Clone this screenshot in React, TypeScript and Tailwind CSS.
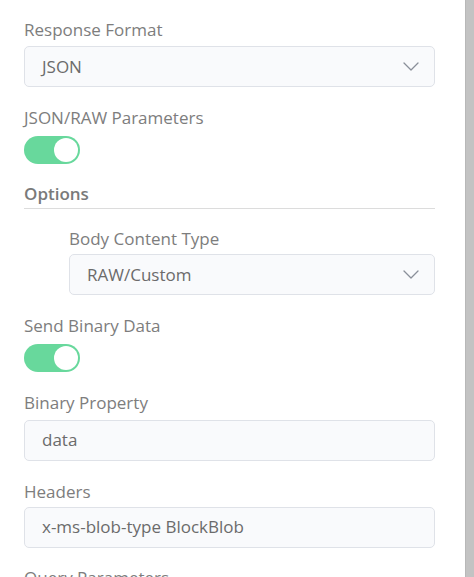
import React from "react";

function Chevron() {
  return (
    <svg width="16" height="9" viewBox="0 0 16 9" fill="none" className="shrink-0">
      <path d="M1 1 L8 8 L15 1" stroke="#8a8f99" strokeWidth="1.3" strokeLinecap="round" strokeLinejoin="round" />
    </svg>
  );
}

function Label({ children, className = "" }: { children: React.ReactNode; className?: string }) {
  return <div className={"text-[17px] leading-[24px] text-[#7d7d7d] " + className}>{children}</div>;
}

function Select({ value, className = "" }: { value: string; className?: string }) {
  return (
    <div className={"h-[41px] flex items-center justify-between rounded-[5px] border border-[#dfe2e8] bg-[#f9fafc] pl-[17px] pr-[15px] " + className}>
      <span className="text-[17px] text-[#6b6b6b]">{value}</span>
      <Chevron />
    </div>
  );
}

function Input({ value, className = "" }: { value: string; className?: string }) {
  return (
    <div className={"h-[41px] flex items-center rounded-[5px] border border-[#dfe2e8] bg-[#f9fafc] pl-[17px] " + className}>
      <span className="text-[17px] text-[#6b6b6b]">{value}</span>
    </div>
  );
}

function Toggle({ className = "" }: { className?: string }) {
  return (
    <div className={"w-[56px] h-[28px] rounded-full bg-[#68d89c] flex items-center justify-end pr-[2px] " + className}>
      <div className="w-[24px] h-[24px] rounded-full bg-white" />
    </div>
  );
}

export default function App() {
  return (
    <div className="w-[474px] h-[577px] overflow-hidden bg-white flex items-start" style={{ fontFamily: '"Open Sans", sans-serif' }}>
      <div className="flex-1 pl-[24px] pr-[30px] pt-[18px]">
        <Label>Response Format</Label>
        <Select value="JSON" className="mt-[4px]" />

        <Label className="mt-[18.5px]">JSON/RAW Parameters</Label>
        <Toggle className="mt-[6px]" />

        <div className="mt-[18px] border-b border-[#dcdcdc] pb-[2px] text-[17px] leading-[24px] font-semibold text-[#7a7a7a]">
          Options
        </div>

        <div className="pl-[45px] mt-[18px]">
          <Label>Body Content Type</Label>
          <Select value="RAW/Custom" className="mt-[3.5px]" />
        </div>

        <Label className="mt-[19px]">Send Binary Data</Label>
        <Toggle className="mt-[6px]" />

        <Label className="mt-[18.5px]">Binary Property</Label>
        <Input value="data" className="mt-[5px]" />

        <Label className="mt-[19px]">Headers</Label>
        <Input value="x-ms-blob-type BlockBlob" className="mt-[3px]" />

        <Label className="mt-[18.5px]">Query Parameters</Label>
      </div>
      <div className="w-[9px] h-[577px] shrink-0 bg-[#c3c3c3] border-l border-[#b8b8b8]" />
    </div>
  );
}
